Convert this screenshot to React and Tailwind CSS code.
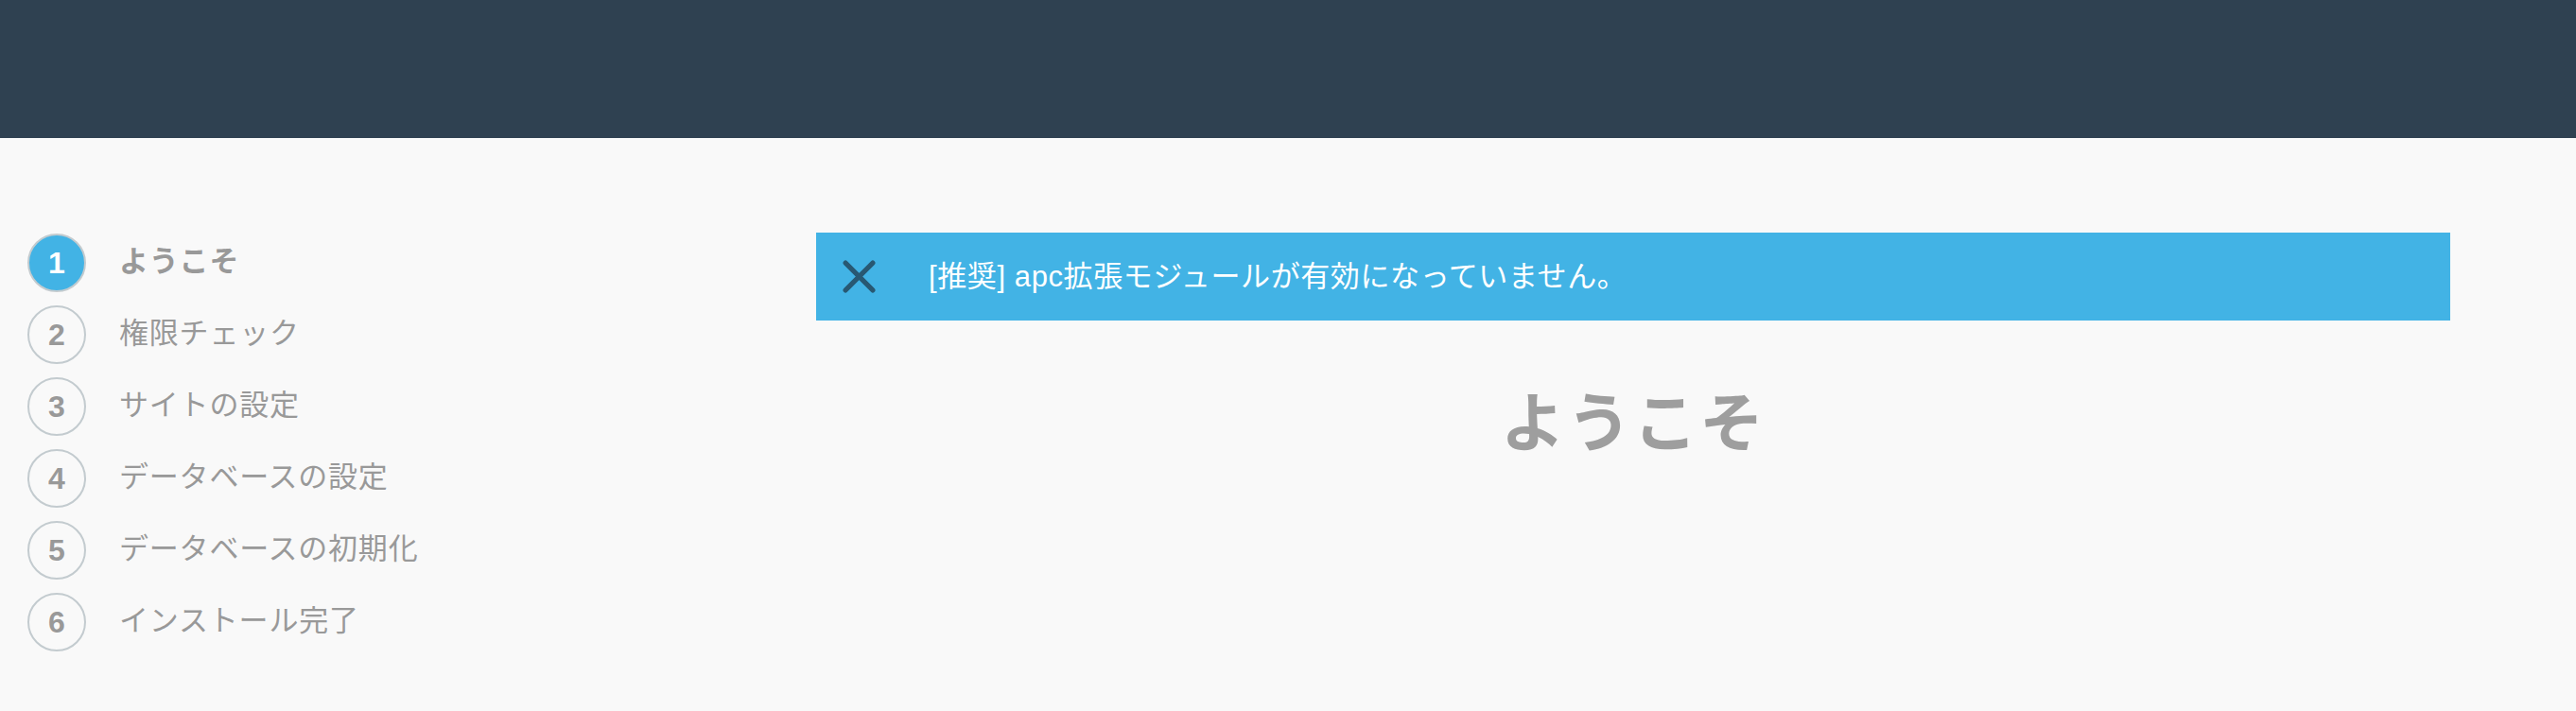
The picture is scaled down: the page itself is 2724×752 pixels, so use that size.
import React from "react";

const steps = [
  "ようこそ",
  "権限チェック",
  "サイトの設定",
  "データベースの設定",
  "データベースの初期化",
  "インストール完了",
];

const jp = { fontFamily: '"Liberation Sans", "Noto Sans CJK JP", sans-serif' };

function StepItem({ num, label, active }) {
  return (
    <li className="flex items-center h-[62px] gap-[35px]">
      <div
        className={
          active
            ? "w-[62px] h-[62px] rounded-full border-2 border-[#c3cbcf] bg-[#42b3e5] text-white flex items-center justify-center text-[32px] font-bold"
            : "w-[62px] h-[62px] rounded-full border-2 border-[#c3cbcf] text-[#999999] flex items-center justify-center text-[32px] font-bold"
        }
      >
        {num}
      </div>
      <span
        className={
          active
            ? "text-[31px] tracking-[0.8px] text-[#999999] font-bold leading-none -mt-[4px]"
            : "text-[31px] tracking-[0.8px] text-[#999999] leading-none -mt-[4px]"
        }
      >
        {label}
      </span>
    </li>
  );
}

export default function App() {
  return (
    <div className="min-h-screen bg-[#f9f9f9]" style={jp}>
      {/* header */}
      <header className="h-[146px] bg-[#2f4151]" />

      <main className="flex pt-[100px]">
        {/* steps */}
        <aside className="w-[863px] pl-[29px] pt-px">
          <ul className="flex flex-col gap-[14px]">
            {steps.map((s, i) => (
              <StepItem key={s} num={i + 1} label={s} active={i === 0} />
            ))}
          </ul>
        </aside>

        {/* content */}
        <section className="w-[1728px]">
          <div className="h-[93px] bg-[#42b3e5] flex items-center">
            <div className="pl-[28px] pr-[56px] flex items-center">
              <svg width="35" height="35" viewBox="0 0 34 34" className="text-[#285872]">
                <path d="M3 3 L31 31 M31 3 L3 31" stroke="currentColor" strokeWidth="5" strokeLinecap="round" />
              </svg>
            </div>
            <p className="text-white text-[31px] tracking-[0.6px] leading-none">
              [推奨] apc拡張モジュールが有効になっていません。
            </p>
          </div>
          <h1 className="text-center text-[#9e9e9e] text-[68px] font-bold mt-[58px] tracking-[2px]">
            ようこそ
          </h1>
        </section>
      </main>
    </div>
  );
}
